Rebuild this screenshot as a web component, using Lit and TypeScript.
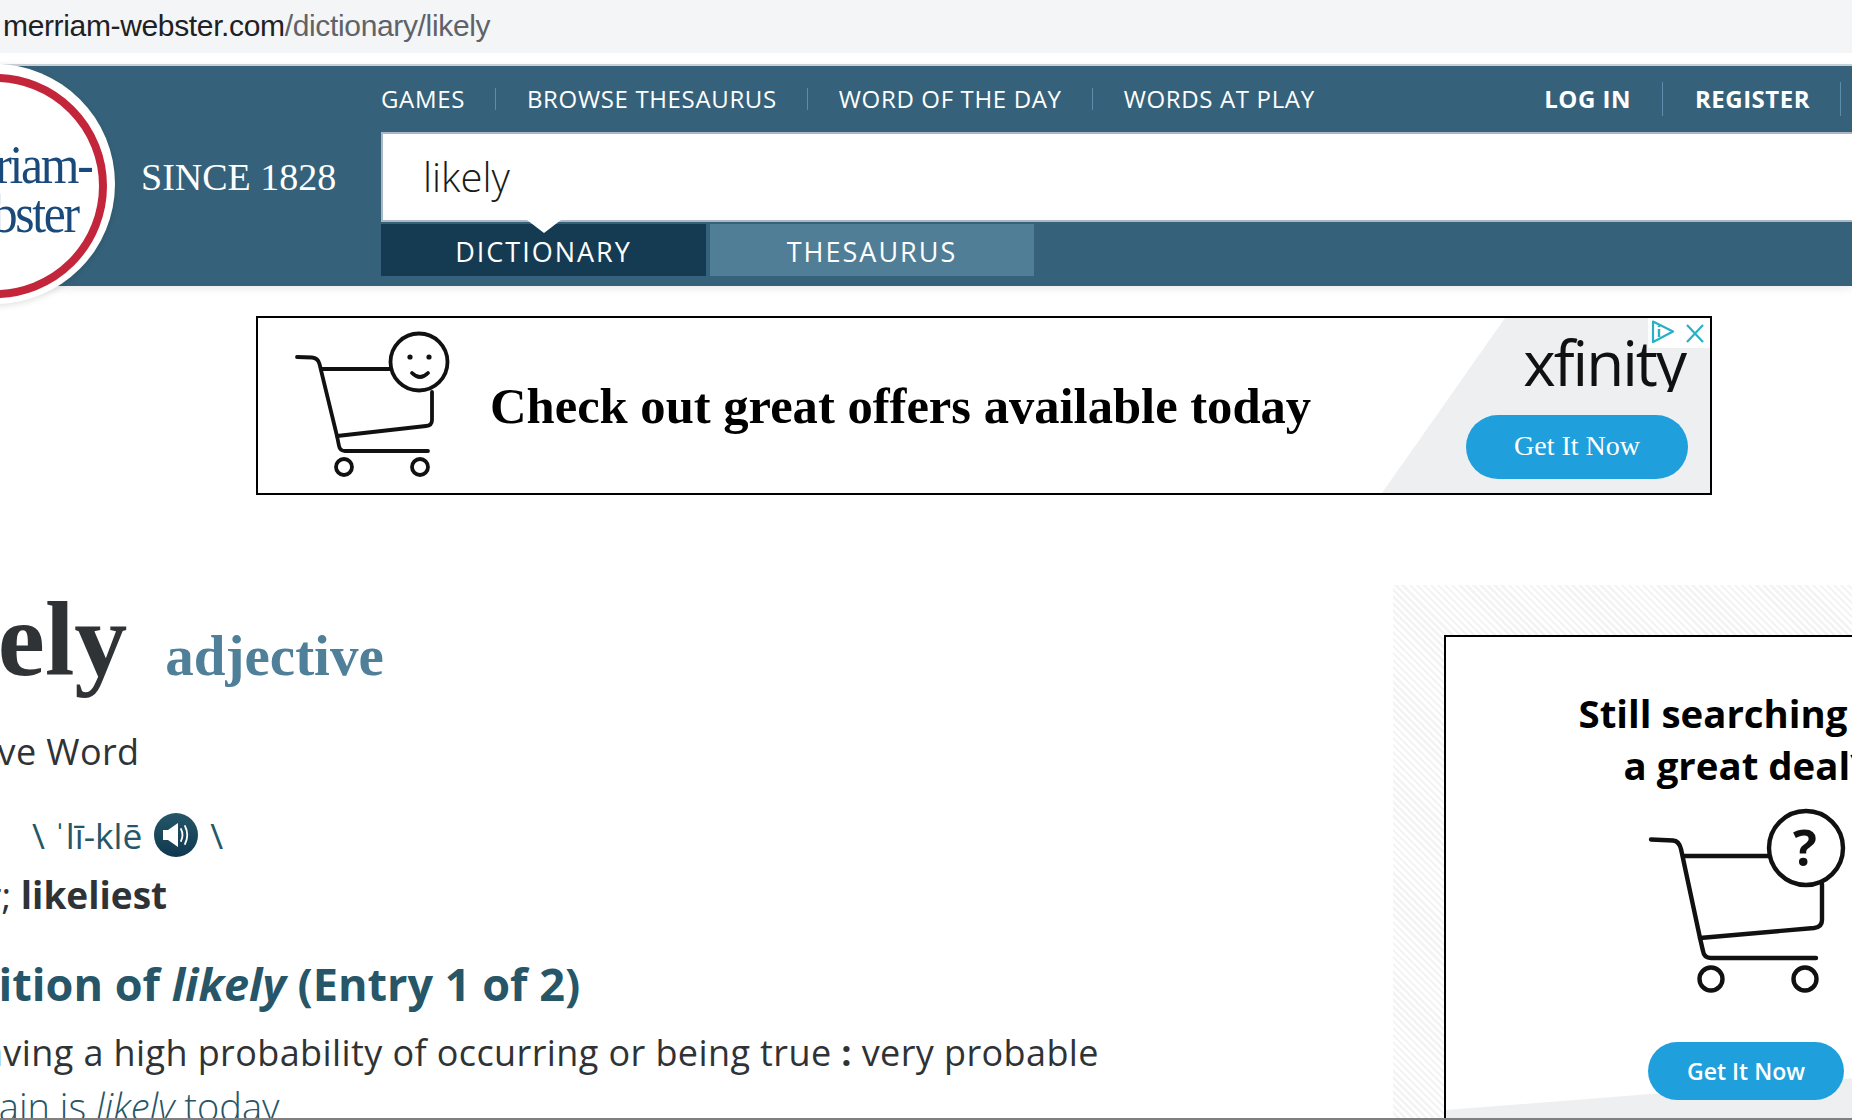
import { LitElement, html, css, svg } from "lit";
import { customElement } from "lit/decorators.js";

const cartSmile = svg`
  <g fill="none" stroke="#111" stroke-width="3.8" stroke-linecap="round" stroke-linejoin="round">
    <path d="M297 357 L312 357.5 Q318 358 319.5 364 L337 436 L339 446 Q340 451 345 451 L428 451"/>
    <path d="M322 369 H390"/>
    <circle cx="419" cy="362" r="28.5"/>
    <path d="M432 392 V420 Q432 425.5 426 426 L337 436"/>
    <circle cx="344" cy="467" r="8"/>
    <circle cx="420" cy="467" r="8"/>
    <path d="M412 373 Q420 381 428 373"/>
  </g>
  <circle cx="410" cy="357" r="2.6" fill="#111"/>
  <circle cx="429" cy="357" r="2.6" fill="#111"/>`;

const cartAsk = svg`
  <g fill="none" stroke="#111" stroke-width="4.4" stroke-linecap="round" stroke-linejoin="round">
    <path d="M1651 839.500 L1673 840.500 Q1679 841 1681 849 L1700 938 L1703 951 Q1704 958 1711 958 L1816 958"/>
    <path d="M1683 856 H1769"/>
    <circle cx="1806" cy="848" r="37"/>
    <path d="M1822 884 V920 Q1822 927 1814 928 L1700 938"/>
    <circle cx="1711" cy="979" r="11.500"/>
    <circle cx="1805" cy="979" r="11.500"/>
  </g>
  <text x="1805" y="866" text-anchor="middle" class="ask">?</text>`;

@customElement("app-root")
export class AppRoot extends LitElement {
  static styles = css`
    :host { display: block; width: 1852px; height: 1120px; overflow: hidden; position: relative; background: #fff; font-family: "Open Sans", sans-serif; color: #303336; }
    .addr { height: 53px; background: #f4f5f6; font: 30px/52px "Liberation Sans", sans-serif; padding-left: 3px; color: #5f6368; letter-spacing: -0.35px; white-space: nowrap; }
    .addr b { font-weight: 400; color: #202124; }
    .gap { height: 11px; }
    .header { height: 220px; background: #35627a; border-top: 2px solid #c9d0d5; box-shadow: 0 3px 8px rgba(0,0,0,.08); display: grid; grid-template-columns: 381px 1fr; position: relative; box-sizing: content-box; }
    .logo { position: absolute; left: -125px; top: -2px; width: 240px; height: 240px; border-radius: 50%; background: #fff; box-shadow: 0 2px 6px rgba(0,0,0,.12); display: flex; align-items: center; justify-content: center; }
    .ring { width: 224px; height: 224px; box-sizing: border-box; margin-top: 4px; border: 8px solid #c3263a; border-radius: 50%; display: flex; flex-direction: column; align-items: center; justify-content: center; font: 54px/50px "Liberation Serif", serif; color: #1a4a7c; letter-spacing: -2.5px; padding: 6px 0 0 20px; white-space: nowrap; }
    .ring span { display: block; height: 49px; transform: scaleX(.92); }
    .since { grid-column: 1; align-self: start; margin: 88px 0 0 141px; font: 38px/46px "Liberation Serif", serif; color: #fff; white-space: nowrap; position: relative; }
    .right { display: flex; flex-direction: column; grid-column: 2; min-width: 0; }
    .nav { height: 66px; display: flex; align-items: center; color: #fff; font-size: 24px; white-space: nowrap; letter-spacing: .65px; }
    .nav .it { padding-right: 30px; }
    .nav .it + .it { padding-left: 31px; border-left: 1px solid #5e8dac; line-height: 22px; }
    .nav .it:first-child { line-height: 22px; }
    .auth { display: flex; margin-left: auto; margin-right: 11px; font-weight: 700; letter-spacing: .5px; }
    .auth span { padding: 0 31px; line-height: 34px; border-right: 1px solid #5e8dac; }
    .auth span + span { padding-right: 30px; padding-left: 32px; }
    .search { height: 86px; background: #fff; border: solid #a9b8c3; border-width: 2px 0 2px 2px; font-weight: 300; font-size: 40px; line-height: 86px; padding-left: 40px; color: #1a1a1a; position: relative; }
    .notch { position: absolute; left: 144px; bottom: -13px; width: 0; height: 0; border-left: 17px solid transparent; border-right: 17px solid transparent; border-top: 13px solid #fff; z-index: 1; }
    .tabs { display: flex; gap: 4px; margin-top: 2px; }
    .tab { height: 52px; line-height: 56px; width: 325px; text-align: center; color: #fff; font-size: 27px; letter-spacing: 2px; background: #153b52; }
    .tab.alt { width: 324px; background: #507e96; font-weight: 400; }
    .ad { margin: 30px 0 0 256px; width: 1456px; height: 179px; box-sizing: border-box; border: 2px solid #000; display: flex; align-items: center; padding-left: 32px; position: relative; overflow: hidden; }
    .ad .poly { position: absolute; inset: 0; width: 100%; height: 100%; }
    .ad .cart { width: 165px; height: 160px; position: relative; flex: none; margin-top: -1px; }
    .ad .head { margin-left: 35px; font: 700 50.6px/60px "Liberation Serif", serif; color: #000; white-space: nowrap; position: relative; }
    .ad .col { margin-left: auto; width: 222px; margin-right: 22px; position: relative; display: flex; flex-direction: column; align-self: flex-start; margin-top: 20px; }
    .xf { height: 54px; overflow: hidden; font: 500 62px/48px "Open Sans", sans-serif; color: #111; text-align: right; letter-spacing: -2px; padding-right: 3px; }
    .cta { margin-top: 23px; height: 64px; border-radius: 32px; background: #1f9fdc; color: #fff; font: 28px/62px "Liberation Serif", serif; text-align: center; }
    .choices { position: absolute; right: 0; top: 0; width: 62px; height: 30px; background: #fff; }
    .main { display: flex; margin-top: 90px; height: 533px; }
    .left { width: 1393px; flex: none; overflow: hidden; height: 533px; }
    .title { display: flex; align-items: baseline; margin-left: -120px; height: 110px; }
    .title h1 { margin: 0; font: 700 106px/110px "Liberation Serif", serif; color: #303336; }
    .title em { font: 700 57px/110px "Liberation Serif", serif; color: #4f7f99; margin-left: 38px; }
    .save { margin: 34px 0 0 -43px; font-size: 36px; letter-spacing: .4px; line-height: 46px; }
    .pron { margin: 37px 0 1px 32px; display: flex; align-items: center; gap: 12px; font-size: 35.3px; line-height: 46px; color: #265667; font-weight: 400; }
    .spk { width: 44px; height: 44px; flex: none; }
    .forms { margin: 14px 0 0 -112px; font-size: 37px; line-height: 46px; font-weight: 700; white-space: nowrap; }
    .forms i { font-style: normal; font-weight: 400; }
    .def { margin: 38px 0 0 -122px; font-size: 45px; line-height: 56px; font-weight: 700; color: #265667; white-space: nowrap; }
    .txt { margin: 18px 0 0 -44px; font-size: 36px; letter-spacing: .4px; line-height: 46px; white-space: nowrap; }
    .ex { margin: 7px 0 0 -16px; font-size: 38px; line-height: 46px; font-weight: 300; color: #265667; white-space: nowrap; }
    .aside { flex: 1; padding: 50px 0 0 51px; background: repeating-linear-gradient(45deg, #fff 0 2.5px, #f4f4f4 2.5px 5px); }
    .ad2 { width: 604px; height: 483px; box-sizing: border-box; border: 2px solid #000; border-bottom: 0; background: #fff; display: flex; flex-direction: column; align-items: center; position: relative; overflow: hidden; padding-top: 50px; }
    .ad2 .poly { position: absolute; left: 0; bottom: 0; }
    .ad2 .q { font-size: 38.4px; line-height: 52px; font-weight: 700; color: #000; text-align: center; white-space: nowrap; position: relative; }
    .ad2 .cart2 { width: 210px; height: 190px; margin: 14px 0 0 0; position: relative; flex: none; }
    .ad2 .go { margin-top: 47px; width: 196px; height: 58px; border-radius: 29px; background: #1f9fdc; color: #fff; font-size: 23px; font-weight: 600; line-height: 58px; text-align: center; position: relative; flex: none; }
    .ask { font: 700 50px "Open Sans", sans-serif; fill: #111; }
    .foot { position: absolute; left: 0; right: 0; bottom: 0; height: 2px; background: #808080; }
  `;

  render() {
    return html`
      <div class="addr"><b>merriam-webster.com</b>/dictionary/likely</div>
      <div class="gap"></div>
      <header class="header">
        <div class="logo"><div class="ring"><span>Merriam-</span><span>Webster</span></div></div>
        <div class="since">SINCE 1828</div>
        <div class="right">
          <nav class="nav">
            <span class="it">GAMES</span>
            <span class="it">BROWSE THESAURUS</span>
            <span class="it">WORD OF THE DAY</span>
            <span class="it">WORDS AT PLAY</span>
            <div class="auth"><span>LOG IN</span><span>REGISTER</span></div>
          </nav>
          <div class="search">likely<div class="notch"></div></div>
          <div class="tabs"><div class="tab">DICTIONARY</div><div class="tab alt">THESAURUS</div></div>
        </div>
      </header>
      <div class="ad">
        <svg class="poly" viewBox="0 0 1452 175"><polygon points="1247,0 1452,0 1452,175 1124,175" fill="#eeeff1"/></svg>
        <svg class="cart" viewBox="290 325 165 160">${cartSmile}</svg>
        <div class="head">Check out great offers available today</div>
        <div class="col">
          <div class="xf">xfinity</div>
          <div class="cta">Get It Now</div>
        </div>
        <svg class="choices" viewBox="0 0 62 30">
          <path d="M5 3.5 L25 13.5 L5 24 Z" fill="none" stroke="#2ab0c4" stroke-width="2.2" stroke-linejoin="round"/>
          <path d="M11 11 V19 M11 7.5 V9" stroke="#2ab0c4" stroke-width="2.4" fill="none"/>
          <path d="M39 7 L55 24 M55 7 L39 24" stroke="#2ab0c4" stroke-width="2.2" fill="none"/>
        </svg>
      </div>
      <div class="main">
        <div class="left">
          <div class="title"><h1>likely</h1><em>adjective</em></div>
          <div class="save">Save Word</div>
          <div class="pron">
            <span>\\ ˈlī-klē</span>
            <svg class="spk" viewBox="0 0 44 44">
              <defs><linearGradient id="g" x1="0" y1="0" x2="0" y2="1"><stop offset="0" stop-color="#265667"/><stop offset="1" stop-color="#0f3850"/></linearGradient></defs>
              <circle cx="22" cy="22" r="22" fill="url(#g)"/>
              <path d="M9 17 H14 L24 10 V34 L14 27 H9 Z" fill="#fff"/>
              <path d="M27 16 Q30 22 27 28 M31 13 Q35.500 22 31 31" stroke="#fff" stroke-width="1.800" fill="none" stroke-linecap="round"/>
            </svg>
            <span>\\</span>
          </div>
          <div class="forms"><i>likelier; </i>likeliest</div>
          <div class="def">Definition of <em>likely</em> (Entry 1 of 2)</div>
          <div class="txt">Having a high probability of occurring or being true <b>:</b> very probable</div>
          <div class="ex">rain is <em>likely</em> today</div>
        </div>
        <aside class="aside">
          <div class="ad2">
            <svg class="poly" width="600" height="55" viewBox="0 0 600 55"><polygon points="0,47 600,0 600,55 0,55" fill="#eeeff1"/></svg>
            <div class="q">Still searching for<br/>a great deal?</div>
            <svg class="cart2" viewBox="1641 805 210 190">${cartAsk}</svg>
            <div class="go">Get It Now</div>
          </div>
        </aside>
      </div>
      <div class="foot"></div>
    `;
  }
}
